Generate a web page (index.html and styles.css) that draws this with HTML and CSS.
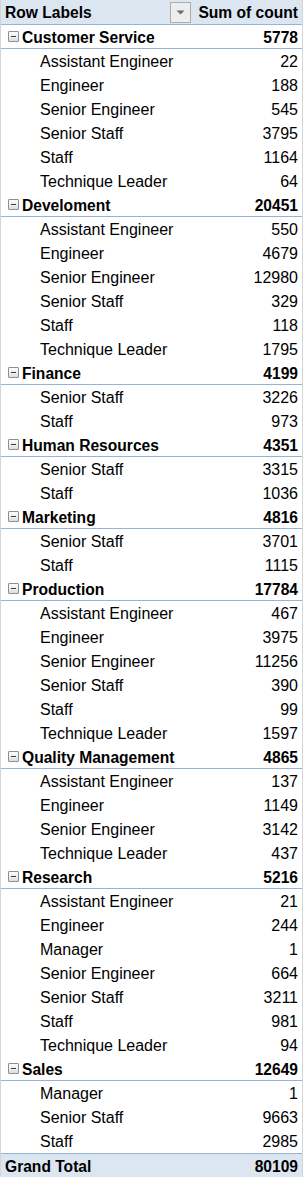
FILE: index.html
```html
<!DOCTYPE html>
<html>
<head>
<meta charset="utf-8">
<link rel="stylesheet" href="styles.css">
</head>
<body>
<div class="pivot">
  <div class="row head">
    <div class="label">Row Labels<span class="dd"><svg width="9" height="5" viewBox="0 0 9 5"><path d="M0.5 0.5h8l-4 4z" fill="#6d6d6d"/></svg></span></div>
    <div class="val">Sum of count</div>
  </div>
  <div id="body"></div>
  <div class="row grand"><div class="label">Grand Total</div><div class="val">80109</div></div>
</div>
<script src="app.js"></script>
</body>
</html>
```
FILE: app.js
```js
const data = [
  ["Customer Service", 5778, [["Assistant Engineer",22],["Engineer",188],["Senior Engineer",545],["Senior Staff",3795],["Staff",1164],["Technique Leader",64]]],
  ["Develoment", 20451, [["Assistant Engineer",550],["Engineer",4679],["Senior Engineer",12980],["Senior Staff",329],["Staff",118],["Technique Leader",1795]]],
  ["Finance", 4199, [["Senior Staff",3226],["Staff",973]]],
  ["Human Resources", 4351, [["Senior Staff",3315],["Staff",1036]]],
  ["Marketing", 4816, [["Senior Staff",3701],["Staff",1115]]],
  ["Production", 17784, [["Assistant Engineer",467],["Engineer",3975],["Senior Engineer",11256],["Senior Staff",390],["Staff",99],["Technique Leader",1597]]],
  ["Quality Management", 4865, [["Assistant Engineer",137],["Engineer",1149],["Senior Engineer",3142],["Technique Leader",437]]],
  ["Research", 5216, [["Assistant Engineer",21],["Engineer",244],["Manager",1],["Senior Engineer",664],["Senior Staff",3211],["Staff",981],["Technique Leader",94]]],
  ["Sales", 12649, [["Manager",1],["Senior Staff",9663],["Staff",2985]]]
];
const body = document.getElementById("body");
let html = "";
for (const [g, t, items] of data) {
  html += `<div class="row group"><div class="label"><span class="minus"></span>${g}</div><div class="val">${t}</div></div>`;
  for (const [n, v] of items) {
    html += `<div class="row item"><div class="label">${n}</div><div class="val">${v}</div></div>`;
  }
}
body.innerHTML = html;
```
FILE: styles.css
```css
html, body { margin: 0; padding: 0; background: #fff; }
body { font-family: "Liberation Sans", Arial, sans-serif; font-size: 16px; color: #000; }
.pivot { width: 303px; border-left: 1px solid #d4d4d4; border-right: 1px solid #d4d4d4; box-sizing: border-box; }
.row { display: flex; align-items: center; height: 24px; box-sizing: border-box; justify-content: space-between; padding-top: 2px; }
.label { display: flex; align-items: center; white-space: nowrap; }
.val { padding-right: 4px; }
.head { background: #dce6f1; border-bottom: 1px solid #95b3d7; font-weight: bold; height: 25px; font-size: 15.6px; }
.head .label { padding-left: 4px; flex: 0 0 190px; box-sizing: border-box; }
.dd { display: inline-flex; align-items: center; justify-content: center; width: 21px; height: 21px; box-sizing: border-box; border: 1px solid #adadad; background: #ededed; margin-left: auto; margin-top: -2px; }
.group { font-weight: bold; border-bottom: 1px solid #95b3d7; font-size: 15.6px; }
.group .label { padding-left: 7px; }
.minus { width: 11px; height: 11px; box-sizing: border-box; border: 1px solid #8a8f96; background: linear-gradient(#fcfcfc, #dcdfe3); margin-right: 3px; position: relative; border-radius: 1px; margin-top: -2px; }
.minus::after { content: ""; position: absolute; left: 2px; right: 2px; top: 4px; height: 1px; background: #3b3b3b; }
.item .label { padding-left: 39px; }
.grand { background: #dce6f1; border-top: 1px solid #95b3d7; font-weight: bold; font-size: 15.6px; }
.grand .label { padding-left: 4px; }
```
